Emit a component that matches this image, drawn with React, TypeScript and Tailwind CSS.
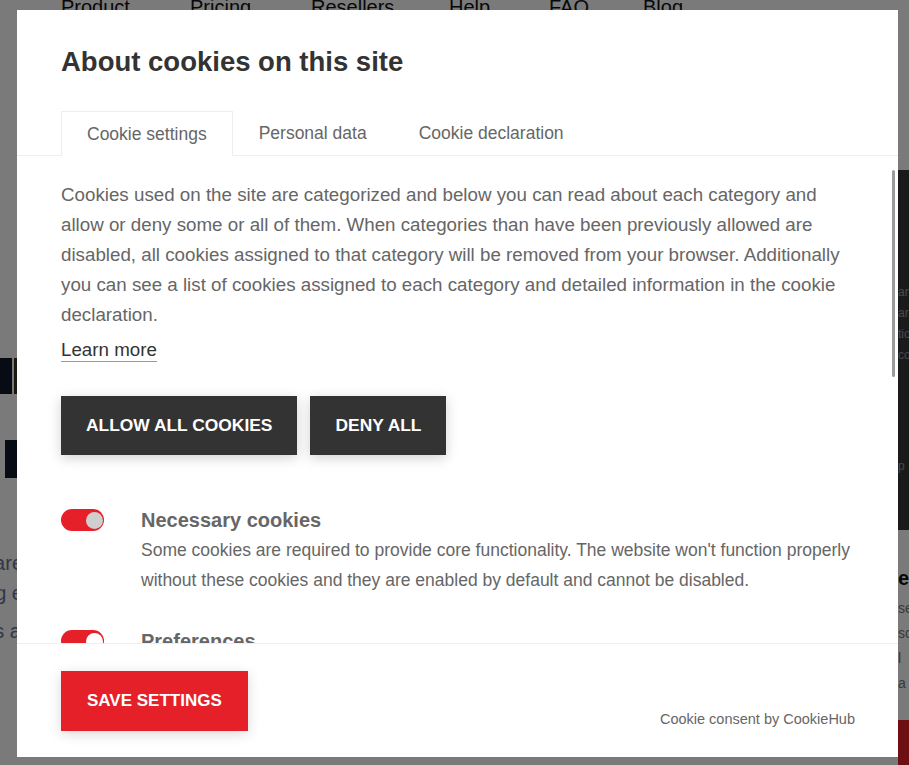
import React from "react";

const navItems = [
  { label: "Product", w: "w-[129px]" },
  { label: "Pricing", w: "w-[121px]" },
  { label: "Resellers", w: "w-[138px]" },
  { label: "Help", w: "w-[100px]" },
  { label: "FAQ", w: "w-[94px]" },
  { label: "Blog", w: "w-[80px]" },
];

function Backdrop() {
  return (
    <div className="flex h-[765px] w-[909px] flex-col bg-white">
      <nav className="-mt-[8px] flex h-[30px] pl-[61px] text-[20px] leading-[30px] text-[#111]">
        {navItems.map((item) => (
          <span key={item.label} className={item.w}>
            {item.label}
          </span>
        ))}
      </nav>
      <div className="flex flex-1">
        {/* left hero column, mostly hidden behind the dialog */}
        <div className="flex w-[17px] flex-col overflow-hidden">
          <div className="mt-[336px] flex h-[36px] gap-[2px]">
            <div className="w-[12px] bg-[#0f1a2b]" />
            <div className="w-[3px] bg-[#3a3220]" />
          </div>
          <div className="ml-[5px] mt-[46px] h-[38px] w-[12px] bg-[#0f1a2b]" />
          <div className="mt-[70px] whitespace-nowrap text-[20px] leading-[30px] text-[#6b7390]">
            <div className="-mr-[6px] flex justify-end">
              <span>are</span>
            </div>
            <div className="-mr-[6px] flex justify-end">
              <span>ng e</span>
            </div>
            <div className="mt-[8px] -mr-[4px] flex justify-end">
              <span>s a</span>
            </div>
          </div>
        </div>
        <div className="flex-1" />
        {/* right column */}
        <div className="flex w-[11px] flex-col overflow-hidden">
          <div className="mt-[148px] h-[360px] bg-[#383838] pt-[112px] text-[12px] leading-[21px] text-[#999]">
            <p>ar</p>
            <p>ar</p>
            <p>tio</p>
            <p>co</p>
            <p className="mt-[90px]">p</p>
          </div>
          <p className="mt-[36px] text-[20px] font-bold leading-[24px] text-[#111]">e</p>
          <div className="mt-[6px] text-[14px] leading-[25px] text-[#777]">
            <p>se</p>
            <p>sc</p>
            <p>l a</p>
          </div>
          <div className="mt-[24px] h-[60px] bg-[#e52029]" />
        </div>
      </div>
      <div className="flex h-[8px]">
        <div className="ml-[391px] w-[244px] bg-[#2c2c2c]" />
        <div className="ml-[38px] h-[3px] w-[190px] bg-[#e52029]" />
        <div className="ml-[27px] h-[3px] flex-1 bg-[#e52029]" />
      </div>
    </div>
  );
}

function Toggle({ knob }: { knob: string }) {
  return (
    <div className="mt-[4px] flex h-[22px] w-[43px] shrink-0 items-center justify-end rounded-full bg-[#e52029] pr-[1px]">
      <div className={`h-[17px] w-[17px] rounded-full ${knob}`} />
    </div>
  );
}

function Category({
  title,
  text,
  knob,
}: {
  title: string;
  text: string;
  knob: string;
}) {
  return (
    <div className="mb-[31px] flex">
      <div className="w-[80px] shrink-0">
        <Toggle knob={knob} />
      </div>
      <div>
        <h3 className="text-[20px] font-bold leading-[30px] text-[#666]">
          {title}
        </h3>
        <p className="text-[17.5px] leading-[30px] text-[#666]">{text}</p>
      </div>
    </div>
  );
}

const tabs = ["Cookie settings", "Personal data", "Cookie declaration"];

export default function App() {
  return (
    <div className="relative h-[765px] w-[909px] overflow-hidden font-['Liberation_Sans',Arial,sans-serif]">
      <Backdrop />
      <div className="absolute inset-0 bg-black/[0.52]" />

      <div className="absolute left-[17px] top-[10px] flex h-[747px] w-[881px] flex-col bg-white">
        <h2 className="px-[44px] pt-[36px] text-[27.5px] font-bold leading-[32px] text-[#333]">
          About cookies on this site
        </h2>

        <div className="mt-[33px] flex border-b border-[#eee] pl-[44px]">
          {tabs.map((t, i) => (
            <div
              key={t}
              className={
                i === 0
                  ? "-mb-px flex h-[45px] items-center border border-b-0 border-[#eee] bg-white px-[25px] text-[17.5px] text-[#666]"
                  : "flex h-[44px] items-center px-[26px] text-[17.5px] text-[#666]"
              }
            >
              {t}
            </div>
          ))}
        </div>

        <div className="relative flex-1 overflow-hidden">
          <div className="pl-[44px] pr-[44px] pt-[24px]">
            <p className="text-[18.75px] leading-[30px] text-[#666]">
              Cookies used on the site are categorized and below you can read
              about each category and allow or deny some or all of them. When
              categories than have been previously allowed are disabled, all
              cookies assigned to that category will be removed from your
              browser. Additionally you can see a list of cookies assigned to
              each category and detailed information in the cookie
              declaration.
            </p>
            <div className="mt-[5px] leading-[30px]">
              <a
                href="#"
                className="border-b border-[#999] pb-[1px] text-[18.75px] text-[#333]"
              >
                Learn more
              </a>
            </div>

            <div className="mt-[30px] flex gap-[13px]">
              <button className="h-[59px] bg-[#333] px-[25px] text-[17.4px] font-bold text-white shadow-[0_3px_12px_rgba(0,0,0,0.18)]">
                ALLOW ALL COOKIES
              </button>
              <button className="h-[59px] bg-[#333] px-[25px] text-[17.4px] font-bold text-white shadow-[0_3px_12px_rgba(0,0,0,0.18)]">
                DENY ALL
              </button>
            </div>

            <div className="mt-[50px]">
              <Category
                title="Necessary cookies"
                text="Some cookies are required to provide core functionality. The website won't function properly without these cookies and they are enabled by default and cannot be disabled."
                knob="bg-[#cfcfcf]"
              />
              <Category
                title="Preferences"
                text="Preference cookies enables the web site to remember information to customize how the web site looks or behaves for each user."
                knob="bg-white"
              />
            </div>
          </div>
          <div className="absolute right-[3px] top-[14px] h-[207px] w-[3px] rounded-full bg-[#9a9a9a]" />
        </div>

        <div className="flex h-[114px] justify-between border-t border-[#eee] pl-[44px] pr-[43px] pt-[27px]">
          <div>
            <button className="h-[60px] bg-[#e52029] px-[26px] text-[17px] font-bold text-white shadow-[0_3px_12px_rgba(0,0,0,0.15)]">
              SAVE SETTINGS
            </button>
          </div>
          <p className="mt-[38px] text-[14.5px] leading-[20px] text-[#666]">
            Cookie consent by CookieHub
          </p>
        </div>
      </div>
    </div>
  );
}
